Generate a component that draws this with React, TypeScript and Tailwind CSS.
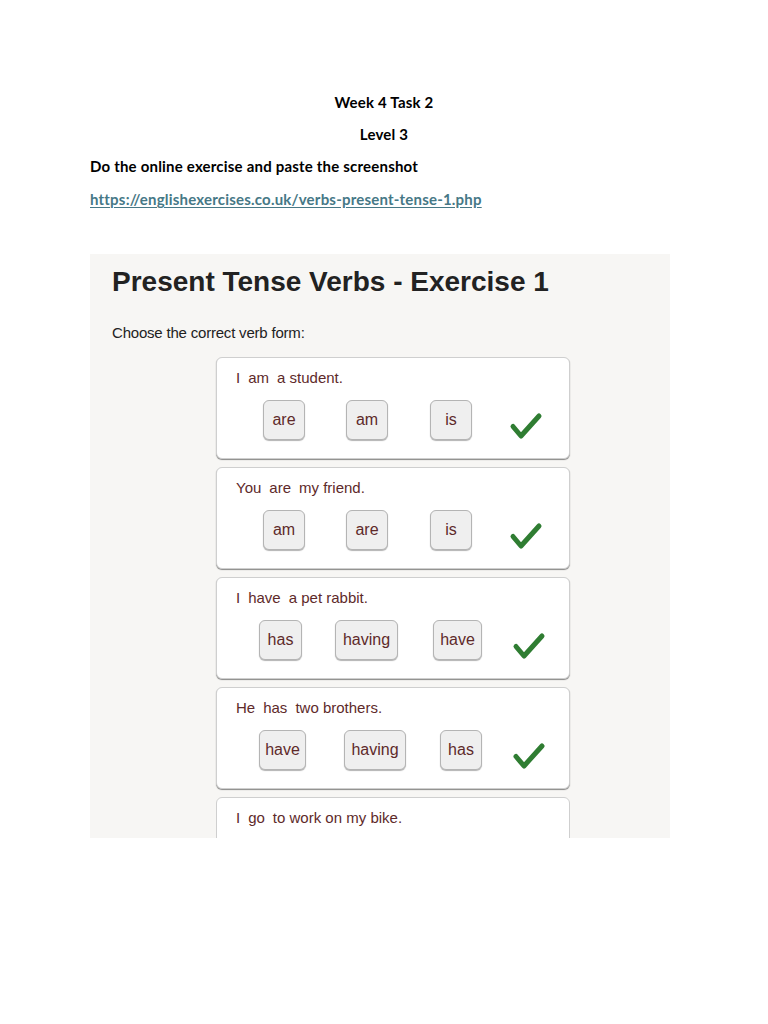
import React from "react";

type Choice = { label: string; w: string; ml: string };
type Item = { parts: string[]; choices: Choice[]; checkMl: string };

const items: Item[] = [
  {
    parts: ["I", "am", "a student."],
    choices: [
      { label: "are", w: "w-[42px]", ml: "ml-[46px]" },
      { label: "am", w: "w-[42px]", ml: "ml-[41px]" },
      { label: "is", w: "w-[42px]", ml: "ml-[42px]" },
    ],
    checkMl: "ml-[37px]",
  },
  {
    parts: ["You", "are", "my friend."],
    choices: [
      { label: "am", w: "w-[42px]", ml: "ml-[46px]" },
      { label: "are", w: "w-[42px]", ml: "ml-[41px]" },
      { label: "is", w: "w-[42px]", ml: "ml-[42px]" },
    ],
    checkMl: "ml-[37px]",
  },
  {
    parts: ["I", "have", "a pet rabbit."],
    choices: [
      { label: "has", w: "w-[43px]", ml: "ml-[42px]" },
      { label: "having", w: "w-[63px]", ml: "ml-[33px]" },
      { label: "have", w: "w-[49px]", ml: "ml-[35px]" },
    ],
    checkMl: "ml-[30px]",
  },
  {
    parts: ["He", "has", "two brothers."],
    choices: [
      { label: "have", w: "w-[47px]", ml: "ml-[42px]" },
      { label: "having", w: "w-[62px]", ml: "ml-[38px]" },
      { label: "has", w: "w-[42px]", ml: "ml-[34px]" },
    ],
    checkMl: "ml-[30px]",
  },
];

function Check() {
  return (
    <svg width="34" height="28" viewBox="0 0 34 28" className="shrink-0 mt-[12px]">
      <path
        d="M4 14.5 L12 24 L30 4"
        fill="none"
        stroke="#2f7d32"
        strokeWidth="5"
        strokeLinecap="round"
        strokeLinejoin="round"
      />
    </svg>
  );
}

function Sentence({ parts }: { parts: string[] }) {
  return (
    <div className="pl-[19px] pt-[10px] text-[15px] leading-[20px] text-[#5e2a2a]">
      {parts.map((p, i) => (
        <span key={i} className={i < parts.length - 1 ? "mr-[8px]" : ""}>
          {p}
        </span>
      ))}
    </div>
  );
}

function Card({ item }: { item: Item }) {
  return (
    <div className="mb-[8px] h-[102px] w-[354px] shrink-0 rounded-[6px] border border-[#cfcfcf] bg-white shadow-[0_1px_1px_rgba(0,0,0,0.45)]">
      <Sentence parts={item.parts} />
      <div className="mt-[12px] flex items-start">
        {item.choices.map((c) => (
          <div
            key={c.label}
            className={`${c.ml} ${c.w} flex h-[40px] items-center justify-center rounded-[6px] border border-[#b4b4b4] bg-[#efefef] text-[16px] text-[#5e2a2a] shadow-[0_1px_1px_rgba(0,0,0,0.3)]`}
          >
            {c.label}
          </div>
        ))}
        <div className={item.checkMl}>
          <Check />
        </div>
      </div>
    </div>
  );
}

export default function App() {
  return (
    <div className="min-h-[1024px] w-[768px] bg-white font-['Lato','Noto_Sans',sans-serif] text-black">
      <div className="pt-[86px] text-[15px] font-bold leading-[32px] tracking-[0.2px]">
        <div className="text-center">Week 4 Task 2</div>
        <div className="text-center">Level 3</div>
        <div className="pl-[90px]">Do the online exercise and paste the screenshot</div>
        <div className="pl-[90px] pt-[1px]">
          <span className="text-[#467886] underline underline-offset-2">
            https://englishexercises.co.uk/verbs-present-tense-1.php
          </span>
        </div>
      </div>

      <div className="ml-[90px] mt-[39px] h-[584px] w-[580px] overflow-hidden bg-[#f7f6f4] pl-[22px] pt-[12px] font-['Liberation_Sans',Arial,sans-serif]">
        <h1 className="text-[28px] font-bold leading-[32px] text-[#222]">
          Present Tense Verbs - Exercise 1
        </h1>
        <p className="mt-[25px] text-[15px] leading-[20px] tracking-[-0.2px] text-[#222]">
          Choose the correct verb form:
        </p>
        <div className="ml-[104px] mt-[14px] flex flex-col">
          {items.map((it, i) => (
            <Card key={i} item={it} />
          ))}
          <div className="h-[102px] w-[354px] shrink-0 rounded-[6px] border border-[#cfcfcf] bg-white">
            <Sentence parts={["I", "go", "to work on my bike."]} />
          </div>
        </div>
      </div>
    </div>
  );
}
